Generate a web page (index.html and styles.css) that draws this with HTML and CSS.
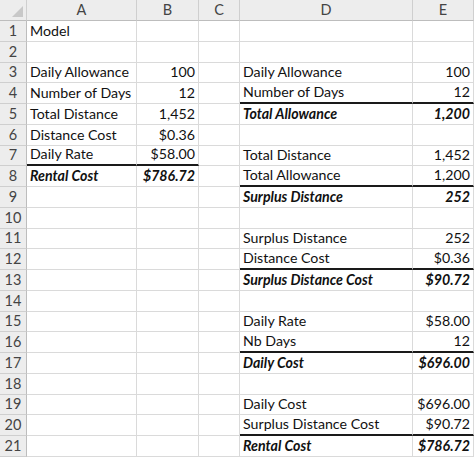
FILE: index.html
```html
<!DOCTYPE html>
<html>
<head>
<meta charset="utf-8">
<link rel="stylesheet" href="styles.css">
</head>
<body>
<div class="sheet">
  <div class="corner"><span class="tri"></span></div>
  <div class="ch">A</div><div class="ch">B</div><div class="ch">C</div><div class="ch">D</div><div class="ch">E</div>

  <div class="rh">1</div><div class="c">Model</div><div class="c"></div><div class="c"></div><div class="c"></div><div class="c"></div>
  <div class="rh">2</div><div class="c"></div><div class="c"></div><div class="c"></div><div class="c"></div><div class="c"></div>
  <div class="rh">3</div><div class="c">Daily Allowance</div><div class="c num">100</div><div class="c"></div><div class="c">Daily Allowance</div><div class="c num">100</div>
  <div class="rh">4</div><div class="c">Number of Days</div><div class="c num">12</div><div class="c"></div><div class="c bt">Number of Days</div><div class="c num bt">12</div>
  <div class="rh">5</div><div class="c">Total Distance</div><div class="c num">1,452</div><div class="c"></div><div class="c b">Total Allowance</div><div class="c num b">1,200</div>
  <div class="rh">6</div><div class="c">Distance Cost</div><div class="c num">$0.36</div><div class="c"></div><div class="c"></div><div class="c"></div>
  <div class="rh">7</div><div class="c bt">Daily Rate</div><div class="c num bt">$58.00</div><div class="c"></div><div class="c">Total Distance</div><div class="c num">1,452</div>
  <div class="rh">8</div><div class="c b">Rental Cost</div><div class="c num b">$786.72</div><div class="c"></div><div class="c bt">Total Allowance</div><div class="c num bt">1,200</div>
  <div class="rh">9</div><div class="c"></div><div class="c"></div><div class="c"></div><div class="c b">Surplus Distance</div><div class="c num b">252</div>
  <div class="rh">10</div><div class="c"></div><div class="c"></div><div class="c"></div><div class="c"></div><div class="c"></div>
  <div class="rh">11</div><div class="c"></div><div class="c"></div><div class="c"></div><div class="c">Surplus Distance</div><div class="c num">252</div>
  <div class="rh">12</div><div class="c"></div><div class="c"></div><div class="c"></div><div class="c bt">Distance Cost</div><div class="c num bt">$0.36</div>
  <div class="rh">13</div><div class="c"></div><div class="c"></div><div class="c"></div><div class="c b">Surplus Distance Cost</div><div class="c num b">$90.72</div>
  <div class="rh">14</div><div class="c"></div><div class="c"></div><div class="c"></div><div class="c"></div><div class="c"></div>
  <div class="rh">15</div><div class="c"></div><div class="c"></div><div class="c"></div><div class="c">Daily Rate</div><div class="c num">$58.00</div>
  <div class="rh">16</div><div class="c"></div><div class="c"></div><div class="c"></div><div class="c bt">Nb Days</div><div class="c num bt">12</div>
  <div class="rh">17</div><div class="c"></div><div class="c"></div><div class="c"></div><div class="c b">Daily Cost</div><div class="c num b">$696.00</div>
  <div class="rh">18</div><div class="c"></div><div class="c"></div><div class="c"></div><div class="c"></div><div class="c"></div>
  <div class="rh">19</div><div class="c"></div><div class="c"></div><div class="c"></div><div class="c">Daily Cost</div><div class="c num">$696.00</div>
  <div class="rh">20</div><div class="c"></div><div class="c"></div><div class="c"></div><div class="c bt">Surplus Distance Cost</div><div class="c num bt">$90.72</div>
  <div class="rh">21</div><div class="c"></div><div class="c"></div><div class="c"></div><div class="c b">Rental Cost</div><div class="c num b">$786.72</div>
</div>
</body>
</html>
```

FILE: styles.css
```css
html, body {
  margin: 0;
  padding: 0;
  background: #ffffff;
  overflow: hidden;
}
.sheet {
  display: grid;
  grid-template-columns: 27px 110px 62px 41px 173px 61px;
  grid-template-rows: 21px repeat(21, 20.76px);
  width: 474px;
  font-family: Lato, "Open Sans", sans-serif;
  font-size: 14.2px;
  color: #111111;
}
.sheet > div {
  box-sizing: border-box;
  border-right: 1px solid #dadada;
  border-bottom: 1px solid #dadada;
  white-space: nowrap;
  overflow: visible;
  display: flex;
  align-items: flex-end;
  padding-bottom: 2px;
}
.corner {
  background: #ededed;
  position: relative;
  border-right-color: #cfcfcf !important;
  border-bottom-color: #bdbdbd !important;
}
.tri {
  position: absolute;
  right: 3px;
  bottom: 3px;
  width: 0;
  height: 0;
  border-left: 11px solid transparent;
  border-bottom: 11px solid #c8c8c8;
}
.ch {
  background: #ededed;
  justify-content: center;
  color: #444444;
  font-size: 14.5px;
  border-right-color: #cfcfcf !important;
  border-bottom-color: #bdbdbd !important;
}
.rh {
  background: #ededed;
  justify-content: center;
  color: #444444;
  font-size: 14.5px;
  border-right-color: #bdbdbd !important;
  border-bottom-color: #cfcfcf !important;
}
.c {
  padding-left: 3px;
  padding-right: 3px;
}
.num {
  justify-content: flex-end;
}
.b {
  font-weight: bold;
  font-style: italic;
}
.bt {
  border-bottom: 2px solid #1a1a1a !important;
  padding-bottom: 1px;
}
```
